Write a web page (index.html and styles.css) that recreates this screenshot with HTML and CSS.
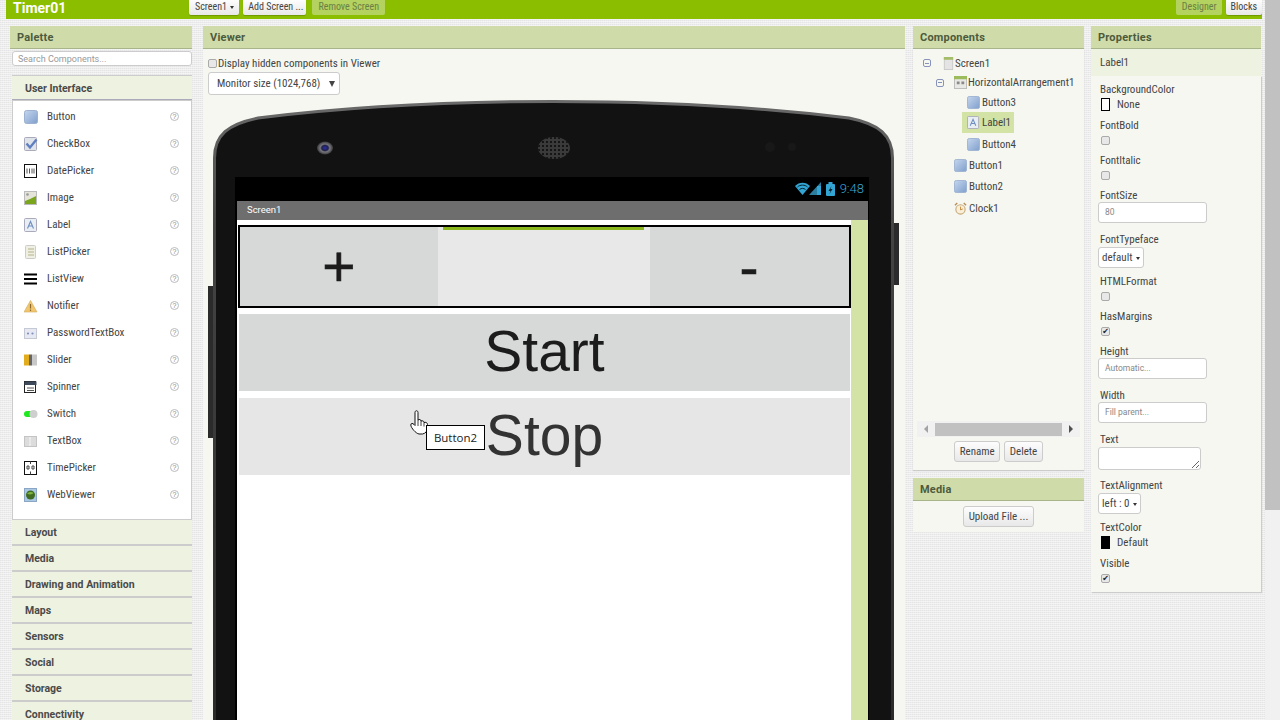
FILE: index.html
```html
<!DOCTYPE html>
<html lang="en">
<head>
    <meta charset="UTF-8">
    <title>Timer01</title>
    <link rel="stylesheet" href="styles.css">
</head>
<body>
    <svg class="icon-defs" width="0" height="0">
        <defs>
            <linearGradient id="blue-btn" x1="0" y1="0" x2="1" y2="1">
                <stop offset="0" stop-color="#c5d6ee"/>
                <stop offset="1" stop-color="#7f9fcc"/>
            </linearGradient>
            <linearGradient id="bezel-edge" x1="0" y1="0" x2="0" y2="1">
                <stop offset="0" stop-color="#6a6a6a"/>
                <stop offset="0.2" stop-color="#444"/>
                <stop offset="1" stop-color="#2a2a2a"/>
            </linearGradient>
            <radialGradient id="lens">
                <stop offset="0" stop-color="#2a2ea8"/>
                <stop offset="0.4" stop-color="#22224a"/>
                <stop offset="0.6" stop-color="#77777f"/>
                <stop offset="1" stop-color="#3a3a3a"/>
            </radialGradient>
            <pattern id="speaker-holes" width="4" height="4" patternUnits="userSpaceOnUse">
                <circle cx="2" cy="2" r="1.1" fill="#0c0c0c"/>
            </pattern>
            <symbol id="ic-button" viewBox="0 0 14 14">
                <rect x="0.5" y="0.5" width="13" height="13" rx="2" fill="url(#blue-btn)" stroke="#9db2d0"/>
            </symbol>
            <symbol id="ic-checkbox" viewBox="0 0 14 14">
                <rect x="0.5" y="0.5" width="12" height="13" rx="1" fill="#dfe3ea" stroke="#aab"/>
                <path d="M2.500 6.500l3.500 4L12.500 2.500" fill="none" stroke="#5f7fc0" stroke-width="2.400"/>
            </symbol>
            <symbol id="ic-datepicker" viewBox="0 0 14 14">
                <rect x="0.500" y="0.500" width="12" height="13" fill="#fff" stroke="#111"/>
                <path d="M3 4.500v5M5.500 4.500v5M8 4.500v5M10 4.500v5" stroke="#555" fill="none"/>
            </symbol>
            <symbol id="ic-image" viewBox="0 0 14 14">
                <rect x="0.500" y="0.500" width="12" height="13" fill="#e4e4d8" stroke="#bbb"/>
                <path d="M1 13V10l5-2 6-3v8z" fill="#7aa61e"/>
                <circle cx="3.500" cy="3.500" r="1.300" fill="#999"/>
            </symbol>
            <symbol id="ic-label" viewBox="0 0 14 14">
                <rect x="0.500" y="0.500" width="12" height="13" rx="1" fill="#e9edf4" stroke="#aab"/>
                <path d="M3.500 10.500L6.500 3.500l3 7M4.700 8h3.600" fill="none" stroke="#6f8fc0" stroke-width="1.100"/>
            </symbol>
            <symbol id="ic-listpicker" viewBox="0 0 14 14">
                <rect x="1.500" y="0.500" width="10" height="13" rx="1" fill="#f0efe4" stroke="#ccc"/>
                <path d="M4 4h6M4 7h6M4 10h6" stroke="#b3b38a"/>
            </symbol>
            <symbol id="ic-listview" viewBox="0 0 14 14">
                <path d="M0 2.500h13M0 7h13M0 11.500h13" stroke="#000" stroke-width="2.200"/>
            </symbol>
            <symbol id="ic-notifier" viewBox="0 0 14 14">
                <path d="M6.500 1.500L13 13H0z" fill="#f1c66c" stroke="#d2aa5e" stroke-width="0.600"/>
                <path d="M6.500 5v4.500M6.500 10.500v1.500" stroke="#8a6a30" stroke-width="1.200"/>
            </symbol>
            <symbol id="ic-password" viewBox="0 0 14 14">
                <rect x="0.500" y="2.500" width="12" height="10" fill="#e6e9f2" stroke="#c5c9d6"/>
                <circle cx="4" cy="7.500" r="1.100" fill="#7f8fc0"/>
                <circle cx="8.500" cy="7.500" r="1.100" fill="#7f8fc0"/>
            </symbol>
            <symbol id="ic-slider" viewBox="0 0 14 14">
                <rect x="0" y="1.500" width="5" height="11" fill="#e3ac1c"/>
                <rect x="5" y="1.500" width="3" height="11" fill="#666"/>
                <rect x="8" y="1.500" width="5" height="11" fill="#c8c8c8"/>
            </symbol>
            <symbol id="ic-spinner" viewBox="0 0 14 14">
                <rect x="0.500" y="1.500" width="11" height="11" fill="#fff" stroke="#222"/>
                <rect x="0.500" y="1.500" width="12" height="3.500" fill="#3d4a5c"/>
                <path d="M3 8h7M3 10.500h7" stroke="#555"/>
            </symbol>
            <symbol id="ic-switch" viewBox="0 0 14 14">
                <rect x="0" y="4" width="9" height="6" rx="3" fill="#1fe81f"/>
                <circle cx="9.500" cy="7" r="4" fill="#cfcfcf"/>
            </symbol>
            <symbol id="ic-textbox" viewBox="0 0 14 14">
                <rect x="0.500" y="2.500" width="12" height="10" fill="#dcdcdc" stroke="#c4c4c4"/>
                <path d="M5 4h2M6 4v7M5 11h2" stroke="#f4f4f4" fill="none"/>
            </symbol>
            <symbol id="ic-timepicker" viewBox="0 0 14 14">
                <rect x="0.500" y="0.500" width="12" height="13" fill="#fff" stroke="#111"/>
                <path d="M3 5h2v3H3zM8 5h2v3H8zM6.500 .5v2.500M6.500 10.500v3" stroke="#444" fill="none"/>
            </symbol>
            <symbol id="ic-webviewer" viewBox="0 0 14 14">
                <rect x="0.500" y="0.500" width="12" height="13" fill="#a9c8e4" stroke="#8aa6c4"/>
                <circle cx="6.500" cy="7" r="4.500" fill="#3f6b22"/>
                <path d="M3 5.500c2-2 5-2 6.500-.5-1 1.500-4 2-6.500.5z" fill="#7fb640"/>
            </symbol>
            <symbol id="ic-screen" viewBox="0 0 14 14">
                <rect x="2.500" y="0.500" width="9" height="13" fill="#e4e4e4" stroke="#c9c9c9"/>
                <rect x="2" y="0" width="10" height="3" fill="#a5bd68"/>
            </symbol>
            <symbol id="ic-arrangement" viewBox="0 0 14 14">
                <rect x="0.500" y="0.500" width="13" height="13" fill="#e8e8e4" stroke="#bbb"/>
                <rect x="0" y="0" width="14" height="3.500" fill="#9cbc5c"/>
                <path d="M3 6h3v3H3zM8 6h3v3H8z" fill="#8a8a8a"/>
            </symbol>
            <symbol id="ic-clock" viewBox="0 0 14 14">
                <circle cx="7" cy="8" r="5" fill="#f7efd9" stroke="#c9a878" stroke-width="1.200"/>
                <path d="M1 3.500L3.500 1M13 3.500L10.500 1" stroke="#b98e5c" stroke-width="1.500"/>
                <path d="M7 5v3.500l2.500 -1" fill="none" stroke="#c98a3c"/>
            </symbol>
        </defs>
    </svg>

    <div class="layout">
        <div class="app">
            <div class="topbar">
                <span class="project-name">Timer01</span>
                <div class="topbar-group">
                    <button class="top-btn">Screen1 <span class="caret"></span></button>
                    <button class="top-btn">Add Screen ...</button>
                    <button class="top-btn top-btn-off">Remove Screen</button>
                </div>
                <div class="topbar-group topbar-right">
                    <button class="top-btn top-btn-off">Designer</button>
                    <button class="top-btn">Blocks</button>
                </div>
            </div>

            <div class="columns">
                <div class="col-palette">
                    <div class="box-header">Palette</div>
                    <div class="palette-search"><input type="text" placeholder="Search Components..."></div>
                    <div class="category category-first">User Interface</div>
                    <div class="palette-list">
                        <div class="palette-item"><svg class="pal-icon"><use href="#ic-button"/></svg><span>Button</span><i class="help">?</i></div>
                        <div class="palette-item"><svg class="pal-icon"><use href="#ic-checkbox"/></svg><span>CheckBox</span><i class="help">?</i></div>
                        <div class="palette-item"><svg class="pal-icon"><use href="#ic-datepicker"/></svg><span>DatePicker</span><i class="help">?</i></div>
                        <div class="palette-item"><svg class="pal-icon"><use href="#ic-image"/></svg><span>Image</span><i class="help">?</i></div>
                        <div class="palette-item"><svg class="pal-icon"><use href="#ic-label"/></svg><span>Label</span><i class="help">?</i></div>
                        <div class="palette-item"><svg class="pal-icon"><use href="#ic-listpicker"/></svg><span>ListPicker</span><i class="help">?</i></div>
                        <div class="palette-item"><svg class="pal-icon"><use href="#ic-listview"/></svg><span>ListView</span><i class="help">?</i></div>
                        <div class="palette-item"><svg class="pal-icon"><use href="#ic-notifier"/></svg><span>Notifier</span><i class="help">?</i></div>
                        <div class="palette-item"><svg class="pal-icon"><use href="#ic-password"/></svg><span>PasswordTextBox</span><i class="help">?</i></div>
                        <div class="palette-item"><svg class="pal-icon"><use href="#ic-slider"/></svg><span>Slider</span><i class="help">?</i></div>
                        <div class="palette-item"><svg class="pal-icon"><use href="#ic-spinner"/></svg><span>Spinner</span><i class="help">?</i></div>
                        <div class="palette-item"><svg class="pal-icon"><use href="#ic-switch"/></svg><span>Switch</span><i class="help">?</i></div>
                        <div class="palette-item"><svg class="pal-icon"><use href="#ic-textbox"/></svg><span>TextBox</span><i class="help">?</i></div>
                        <div class="palette-item"><svg class="pal-icon"><use href="#ic-timepicker"/></svg><span>TimePicker</span><i class="help">?</i></div>
                        <div class="palette-item"><svg class="pal-icon"><use href="#ic-webviewer"/></svg><span>WebViewer</span><i class="help">?</i></div>
                    </div>
                    <div class="category">Layout</div>
                    <div class="category">Media</div>
                    <div class="category">Drawing and Animation</div>
                    <div class="category">Maps</div>
                    <div class="category">Sensors</div>
                    <div class="category">Social</div>
                    <div class="category">Storage</div>
                    <div class="category">Connectivity</div>
                </div>

                <div class="col-viewer">
                    <div class="box-header">Viewer</div>
                    <div class="viewer-body">
                        <label class="hidden-toggle"><span class="check"></span>Display hidden components in Viewer</label>
                        <div class="size-select">Monitor size (1024,768)<span class="size-arrow"></span></div>
                        <div class="phone">
                            <div class="phone-key phone-key-left"></div>
                            <div class="phone-key phone-key-right"></div>
                            <svg class="phone-body" width="681" height="630" viewBox="0 0 681 630">
                                <path d="M1.500 630V58C1.500 35 15 24 45 18C150 5 250 1.500 340 1.500C430 1.500 530 5 636 18C666 24 679.500 35 679.500 58V630Z" fill="#121212" stroke="url(#bezel-edge)" stroke-width="3"/>
                                <ellipse cx="112" cy="48" rx="8" ry="6.500" fill="url(#lens)"/>
                                <ellipse cx="341" cy="48" rx="16" ry="11" fill="#3a3a3a"/>
                                <ellipse cx="341" cy="48" rx="16" ry="11" fill="url(#speaker-holes)"/>
                                <circle cx="557" cy="47" r="5" fill="#181818"/>
                                <circle cx="579" cy="47" r="4" fill="#181818"/>
                            </svg>
                            <div class="phone-screen">
                                <div class="status-bar">
                                    <svg class="status-icons" width="40" height="14" viewBox="0 0 40 14">
                                        <path d="M0 4C4 -.5 11 -.5 15 4L7.500 13Z" fill="#33a5d5"/>
                                        <path d="M2.500 5C5 2.500 10 2.500 12.500 5M4.500 7.500C6.500 6 8.500 6 10.500 7.500" stroke="#04222e" stroke-width="1" fill="none"/>
                                        <path d="M14 13L26 0V13Z" fill="#2b7ea0"/>
                                        <path d="M22 4h4v9h-4z" fill="#33a5d5"/>
                                        <rect x="31" y="2" width="9" height="12" rx="1" fill="#33a5d5"/>
                                        <rect x="33.500" y="0" width="4" height="2" fill="#33a5d5"/>
                                        <path d="M36.500 4l-3 5h2l-1 3 3-5h-2z" fill="#04222e"/>
                                    </svg>
                                    <span class="status-time">9:48</span>
                                </div>
                                <div class="title-bar">Screen1</div>
                                <div class="form-row">
                                    <div class="form">
                                        <div class="arrangement">
                                            <div class="mock-btn mock-side mock-side-first">+</div>
                                            <div class="mock-label"><div class="selected-bar"></div></div>
                                            <div class="mock-btn mock-side mock-side-last">-</div>
                                        </div>
                                        <div class="mock-btn mock-wide mock-start">Start</div>
                                        <div class="mock-btn mock-wide mock-stop">
                                            Stop
                                            <svg class="hand-cursor" width="20" height="26" viewBox="0 0 20 26">
                                                <path d="M5 2.500C5 .2 8 .2 8 2.500V10C9.500 9 11 9.500 11 11C12.500 10.500 14 11 14 12.500C15.500 12 17.500 12.500 17.500 14.500V18C17.500 21 15.500 23.500 12.500 24H9C6 23.500 1 18 .8 15C.8 13 2.800 13 4 14.500L5 15.500Z" fill="#fff" stroke="#111" stroke-width="1"/>
                                                <path d="M8 10v6M11 11v5M14 12.500v4" stroke="#111" stroke-width=".8"/>
                                            </svg>
                                            <span class="tooltip">Button2</span>
                                        </div>
                                    </div>
                                    <div class="form-scroll"></div>
                                </div>
                            </div>
                        </div>
                    </div>
                </div>

                <div class="col-components">
                    <div class="box-header">Components</div>
                    <div class="tree-body">
                        <div class="tree">
                            <div class="tree-row tree-screen"><span class="toggle"></span><svg class="tree-icon"><use href="#ic-screen"/></svg>Screen1</div>
                            <div class="tree-row tree-arr"><span class="toggle"></span><svg class="tree-icon"><use href="#ic-arrangement"/></svg>HorizontalArrangement1</div>
                            <div class="tree-row tree-leaf-2 tree-first-leaf"><svg class="tree-icon"><use href="#ic-button"/></svg>Button3</div>
                            <div class="tree-row tree-leaf-2 tree-selected-row"><span class="tree-selected"><svg class="tree-icon"><use href="#ic-label"/></svg>Label1</span></div>
                            <div class="tree-row tree-leaf-2"><svg class="tree-icon"><use href="#ic-button"/></svg>Button4</div>
                            <div class="tree-row tree-leaf-1"><svg class="tree-icon"><use href="#ic-button"/></svg>Button1</div>
                            <div class="tree-row tree-leaf-1"><svg class="tree-icon"><use href="#ic-button"/></svg>Button2</div>
                            <div class="tree-row tree-leaf-1 tree-last"><svg class="tree-icon"><use href="#ic-clock"/></svg>Clock1</div>
                        </div>
                        <div class="h-scroll">
                            <span class="h-arrow h-arrow-left"></span>
                            <span class="h-thumb"></span>
                            <span class="h-arrow h-arrow-right"></span>
                        </div>
                        <div class="tree-actions">
                            <button class="gwt-btn">Rename</button>
                            <button class="gwt-btn">Delete</button>
                        </div>
                    </div>
                    <div class="box-header media-header">Media</div>
                    <div class="media-body"><button class="gwt-btn">Upload File ...</button></div>
                </div>

                <div class="col-properties">
                    <div class="box-header">Properties</div>
                    <div class="prop-target">Label1</div>
                    <div class="prop-body">
                        <div class="prop-name">BackgroundColor</div>
                        <div class="prop-color"><span class="swatch"></span>None</div>
                        <div class="prop-name">FontBold</div>
                        <div class="prop-check"><span class="check"></span></div>
                        <div class="prop-name">FontItalic</div>
                        <div class="prop-check"><span class="check"></span></div>
                        <div class="prop-name">FontSize</div>
                        <div class="prop-input">80</div>
                        <div class="prop-name">FontTypeface</div>
                        <div class="prop-select">default <span class="caret"></span></div>
                        <div class="prop-name">HTMLFormat</div>
                        <div class="prop-check"><span class="check"></span></div>
                        <div class="prop-name">HasMargins</div>
                        <div class="prop-check"><span class="check is-on">&#10004;</span></div>
                        <div class="prop-name">Height</div>
                        <div class="prop-input">Automatic...</div>
                        <div class="prop-name">Width</div>
                        <div class="prop-input">Fill parent...</div>
                        <div class="prop-name">Text</div>
                        <textarea class="prop-text"></textarea>
                        <div class="prop-name">TextAlignment</div>
                        <div class="prop-select">left : 0 <span class="caret"></span></div>
                        <div class="prop-name">TextColor</div>
                        <div class="prop-color"><span class="swatch swatch-black"></span>Default</div>
                        <div class="prop-name">Visible</div>
                        <div class="prop-check"><span class="check is-on">&#10004;</span></div>
                    </div>
                </div>
            </div>
        </div>
        <div class="page-scroll"><div class="page-thumb"></div></div>
    </div>
</body>
</html>
```

FILE: styles.css
```css
:root {
    --bar-green: #8cbe00;
    --box-head: #cfdcaa;
    --box-bg: #f5f7f0;
    --cat-bg: #eef2e0;
    --text: #444;
    --ui-font: "Liberation Sans Narrow", "Roboto Condensed", Roboto, sans-serif;
}

* {
    box-sizing: border-box;
}

html, body {
    height: 720px;
    overflow: hidden;
}

body {
    margin: 0;
    font-family: var(--ui-font);
    font-size: 11px;
    color: var(--text);
    background: #f4f4f4;
}

.icon-defs {
    position: absolute;
}

.layout {
    display: flex;
    height: 720px;
}

.app {
    width: 1265px;
    padding-left: 6px;
    display: flex;
    flex-direction: column;
    background-color: #ececec;
    background-image:
        repeating-linear-gradient(0deg, rgba(255, 255, 255, 0.5) 0 1px, transparent 1px 2px),
        repeating-linear-gradient(90deg, rgba(0, 0, 0, 0.03) 0 1px, transparent 1px 2px);
}

.page-scroll {
    width: 15px;
    background: #f1f1f1;
}

.page-thumb {
    height: 510px;
    background: #c1c1c1;
}

/* top bar */
.topbar {
    width: 1256px;
    height: 19px;
    flex: none;
    display: flex;
    background: var(--bar-green);
}

.project-name {
    width: 183px;
    padding-left: 7px;
    font-family: Roboto, sans-serif;
    font-size: 14px;
    font-weight: 700;
    line-height: 16px;
    color: #fff;
}

.topbar-group {
    display: flex;
    gap: 4px;
}

.topbar-right {
    margin-left: auto;
}

.top-btn {
    height: 15px;
    padding: 0 3px 2px 5px;
    border: 0;
    border-radius: 0 0 2px 2px;
    background: linear-gradient(#fdfdfd, #e8e8e8);
    font: 10px var(--ui-font);
    color: #444;
    box-shadow: 0 1px 1px rgba(0, 0, 0, 0.2);
}

.top-btn:first-child {
    padding: 0 5px 2px 6px;
}

.top-btn-off {
    padding: 0 6px 2px;
    background: #b3d25f;
    color: #6b7f45;
    box-shadow: none;
}

.topbar-group .top-btn-off:nth-child(3) {
    margin-left: 2px;
}

.topbar-right .top-btn:last-child {
    padding: 0 5px 2px;
}

.caret {
    display: inline-block;
    width: 0;
    height: 0;
    margin-left: 1px;
    vertical-align: middle;
    border-top: 3px solid #333;
    border-left: 2px solid transparent;
    border-right: 2px solid transparent;
}

/* columns */
.columns {
    flex: 1;
    min-height: 0;
    display: flex;
    padding: 7px 0 0 4px;
}

.box-header {
    height: 23px;
    padding-left: 7px;
    background: var(--box-head);
    border-bottom: 1px solid #a8b58a;
    font-family: Roboto, sans-serif;
    font-size: 11px;
    font-weight: 700;
    letter-spacing: 0.2px;
    line-height: 23px;
    color: #4d5a3c;
}

.col-palette {
    width: 182px;
    margin-right: 11px;
}

.palette-search {
    padding: 2px 0 0 2px;
    height: 26px;
}

.palette-search input {
    display: block;
    width: 180px;
    height: 15px;
    padding: 0 5px;
    border: 1px solid #ccc;
    border-radius: 3px;
    background: #fff;
    font: 9px Roboto, sans-serif;
}

.palette-search input::placeholder {
    color: #999;
}

.category {
    height: 26px;
    margin-left: 2px;
    padding-left: 13px;
    background: var(--cat-bg);
    border-bottom: 2px solid #ccc;
    font-family: Roboto, sans-serif;
    font-size: 10.500px;
    font-weight: 700;
    line-height: 25px;
    color: #4a4a4a;
}

.category-first {
    height: 25px;
    border-top: 1px solid #ccc;
    border-bottom: 1px solid #aab;
}

.palette-list {
    height: 420px;
    margin-left: 2px;
    padding: 2px 0 0 11px;
    border: 1px solid #ccc;
    background: #fff;
}

.palette-item {
    height: 27px;
    display: flex;
    align-items: center;
}

.pal-icon {
    width: 14px;
    height: 14px;
    margin-right: 9px;
}

.palette-item span {
    flex: 1;
}

.help {
    width: 9px;
    height: 9px;
    margin-right: 12px;
    border: 1px solid #bbb;
    border-radius: 50%;
    font: 7px/8px "Liberation Sans", sans-serif;
    text-align: center;
    color: #888;
}

.col-viewer {
    width: 702px;
    margin-right: 8px;
}

.viewer-body {
    height: 671px;
    padding: 6px 0 0 5px;
    background: var(--box-bg);
    overflow: hidden;
}

.hidden-toggle {
    display: flex;
    align-items: center;
    height: 16px;
}

.check {
    display: block;
    width: 9px;
    height: 9px;
    margin-right: 1px;
    border: 1px solid #aaa;
    border-radius: 2px;
    background: #e8e8e8;
    font: 8px/8px "DejaVu Sans", sans-serif;
    color: #222;
    text-align: center;
}

.size-select {
    display: flex;
    align-items: center;
    width: 132px;
    height: 23px;
    margin-top: 1px;
    padding-left: 8px;
    border: 1px solid #ccc;
    border-radius: 3px;
    background: #fff;
}

.size-arrow {
    margin-left: 9px;
    border-top: 6px solid #444;
    border-left: 3px solid transparent;
    border-right: 3px solid transparent;
}

/* phone */
.phone {
    position: relative;
    width: 681px;
    margin: 5px 0 0 5px;
    padding: 77px 0 0 22px;
}

.phone-body {
    position: absolute;
    top: 0;
    left: 0;
}

.phone-key {
    position: absolute;
    background: #2b2b2b;
}

.phone-key-left {
    left: -5px;
    top: 186px;
    width: 6px;
    height: 152px;
}

.phone-key-right {
    left: 680px;
    top: 123px;
    width: 6px;
    height: 62px;
}

.phone-screen {
    position: relative;
    width: 634px;
    height: 560px;
    background: #000;
}

.status-bar {
    height: 24px;
    display: flex;
    align-items: center;
    justify-content: flex-end;
    padding: 0 5px 1px 0;
}

.status-icons {
    margin-right: 5px;
}

.status-time {
    font-family: Roboto, sans-serif;
    font-size: 13px;
    font-weight: 300;
    color: #3aa4d4;
}

.title-bar {
    height: 19px;
    margin: 0 1px 0 2px;
    padding-left: 10px;
    background: #6e6e6e;
    font-family: Roboto, sans-serif;
    font-size: 9.500px;
    line-height: 18px;
    color: #fff;
}

.form-row {
    display: flex;
    height: 520px;
    margin: 0 1px 0 2px;
}

.form {
    width: 614px;
    padding: 5px 0 0 1px;
    background: #fff;
}

.form-scroll {
    flex: 1;
    background: #d3e2a5;
}

.arrangement {
    display: flex;
    width: 613px;
    height: 83px;
    margin-bottom: 6px;
    border: 2px solid #000;
}

.mock-btn {
    display: flex;
    align-items: center;
    justify-content: center;
    font-family: "Liberation Sans", sans-serif;
    font-size: 57px;
    background: #d7d8d8;
    color: #1c1c1c;
}

.mock-side {
    width: 198px;
    -webkit-text-stroke: 0.6px #1c1c1c;
}

.mock-side-first {
    padding-bottom: 2px;
}

.mock-side-last {
    flex: 1;
    padding-right: 1px;
}

.mock-label {
    width: 212px;
    padding: 0 6px 0 5px;
    background: #e8e8e8;
}

.selected-bar {
    height: 3px;
    background: #8bb81c;
}

.mock-wide {
    position: relative;
    width: 611px;
    height: 77px;
    margin-left: 1px;
    padding-bottom: 4px;
}

.mock-start {
    margin-bottom: 7px;
}

.mock-stop {
    background: #e6e6e6;
    color: #333;
}

.hand-cursor {
    position: absolute;
    left: 171px;
    top: 12px;
}

.tooltip {
    position: absolute;
    left: 187px;
    top: 27px;
    width: 59px;
    height: 25px;
    border: 1px solid #000;
    background: #fff;
    font-family: "Open Sans", sans-serif;
    font-size: 11.500px;
    line-height: 23px;
    text-align: center;
    color: #222;
}

/* components */
.col-components {
    width: 171px;
    margin-right: 7px;
}

.tree-body {
    height: 421px;
    display: flex;
    flex-direction: column;
    background: var(--box-bg);
    box-shadow: 0 1px 1px #ccc;
}

.tree {
    flex: 1;
    padding-top: 4px;
}

.tree-row {
    height: 21px;
    display: flex;
    align-items: center;
}

.tree-screen {
    height: 20px;
    padding-left: 10px;
}

.tree-arr {
    height: 19px;
    padding-left: 23px;
}

.tree-first-leaf {
    height: 20px;
}

.tree-selected-row {
    height: 22px;
    align-items: flex-start;
}

.tree-last {
    height: 22px;
}

.tree-leaf-2 {
    padding-left: 54px;
}

.tree-leaf-1 {
    padding-left: 41px;
}

.toggle {
    width: 8px;
    height: 8px;
    margin-right: 10px;
    border: 1px solid #8893bb;
    border-radius: 2px;
    background: linear-gradient(#8893bb, #8893bb) center / 4px 1px no-repeat;
}

.tree-icon {
    width: 13px;
    height: 13px;
    margin-right: 2px;
}

.tree-screen .tree-icon {
    margin-right: 0;
}

.tree-screen .toggle {
    margin-right: 11px;
}

.tree-arr .tree-icon {
    margin-right: 1px;
}

.tree-selected {
    display: flex;
    align-items: center;
    height: 21px;
    margin-left: -5px;
    padding: 0 3px 0 5px;
    background: #d3e2a5;
}

.h-scroll {
    display: flex;
    align-items: center;
    height: 16px;
    margin: 0 4px;
    background: #f1f1f1;
}

.h-arrow {
    width: 0;
    height: 0;
    margin: 0 7px;
    border-top: 4px solid transparent;
    border-bottom: 4px solid transparent;
}

.h-arrow-left {
    border-right: 4px solid #a3a3a3;
}

.h-arrow-right {
    border-left: 4px solid #505050;
}

.h-thumb {
    flex: 1;
    height: 13px;
    background: #c1c1c1;
}

.tree-actions {
    display: flex;
    justify-content: center;
    gap: 4px;
    height: 33px;
    padding-top: 4px;
}

.gwt-btn {
    height: 21px;
    padding: 0 4.500px;
    border: 1px solid #ccc;
    border-radius: 3px;
    background: linear-gradient(#fdfdfd, #e8e8e8);
    font: 11px var(--ui-font);
    color: #444;
}

.media-header {
    margin-top: 8px;
}

.media-body {
    height: 31px;
    padding-top: 5px;
    text-align: center;
    background: var(--box-bg);
}

/* properties */
.col-properties {
    width: 170px;
}

.prop-target {
    height: 27px;
    padding-left: 9px;
    background: var(--cat-bg);
    line-height: 28px;
}

.prop-body {
    height: 516px;
    padding: 6px 0 0 9px;
    background: var(--box-bg);
    box-shadow: 1px 1px 1px #ccc;
}

.prop-name {
    height: 14px;
    line-height: 16px;
    white-space: nowrap;
}

.prop-color {
    display: flex;
    align-items: center;
    height: 16px;
    margin-bottom: 6px;
    padding-left: 1px;
}

.swatch {
    width: 9px;
    height: 13px;
    margin-right: 7px;
    border: 1px solid #000;
    background: #fff;
}

.swatch-black {
    background: #000;
}

.prop-check {
    height: 21px;
    padding-top: 4px;
    margin-left: 1px;
}

.prop-input {
    width: 109px;
    height: 21px;
    margin: 0 0 9px -2px;
    padding-left: 6px;
    border: 1px solid #ccc;
    border-radius: 3px;
    background: #fff;
    font: 8.500px/19px Roboto, sans-serif;
    color: #888;
}

.prop-select {
    width: fit-content;
    height: 21px;
    margin: 1px 0 6px -2px;
    padding: 0 3px;
    border: 1px solid #ccc;
    border-radius: 3px;
    background: #fff;
    line-height: 19px;
    white-space: nowrap;
}

.prop-text {
    display: block;
    width: 103px;
    height: 23px;
    margin: 1px 0 8px -2px;
    border: 1px solid #ccc;
    border-radius: 3px;
    background: #fff;
}
```
